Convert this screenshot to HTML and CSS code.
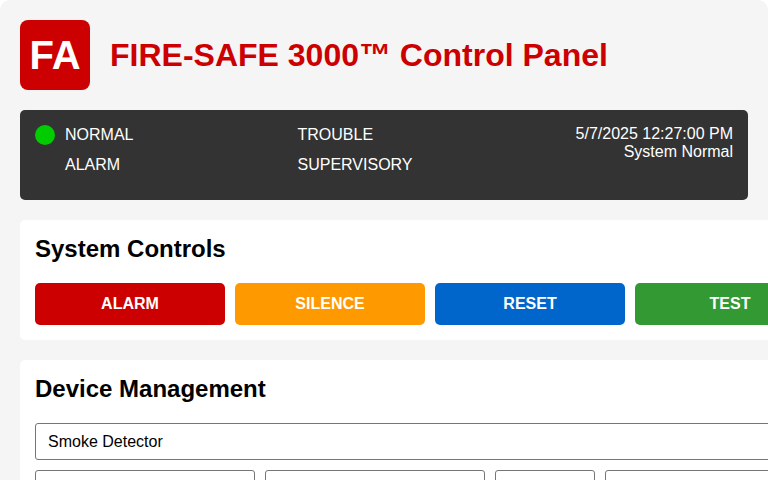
FILE: index.html
```html
<!DOCTYPE html>
<html lang="en">
<head>
    <meta charset="UTF-8">
    <title>FIRE-SAFE 3000 Control Panel</title>
    <link rel="stylesheet" href="styles.css">
</head>
<body>
    <div class="panel">
        <div class="header">
            <div class="logo">FA</div>
            <h1 class="title">FIRE-SAFE 3000™ Control Panel</h1>
        </div>
        <div class="status-bar">
            <div class="indicators">
                <div class="indicator"><span class="light light-on"></span>NORMAL</div>
                <div class="indicator"><span class="light"></span>TROUBLE</div>
                <div class="indicator"><span class="light"></span>ALARM</div>
                <div class="indicator"><span class="light"></span>SUPERVISORY</div>
            </div>
            <div class="clock">
                <div>5/7/2025 12:27:00 PM</div>
                <div>System Normal</div>
            </div>
        </div>
        <div class="card">
            <h2 class="card-title">System Controls</h2>
            <div class="controls">
                <button class="btn btn-alarm">ALARM</button>
                <button class="btn btn-silence">SILENCE</button>
                <button class="btn btn-reset">RESET</button>
                <button class="btn btn-test">TEST</button>
            </div>
        </div>
        <div class="card">
            <h2 class="card-title">Device Management</h2>
            <select class="field field-full">
                <option>Smoke Detector</option>
                <option>Heat Detector</option>
                <option>Pull Station</option>
            </select>
            <div class="field-row">
                <input class="field field-wide" type="text">
                <input class="field field-wide" type="text">
                <input class="field field-small" type="text">
                <input class="field field-wide" type="text">
            </div>
        </div>
    </div>
</body>
</html>
```

FILE: styles.css
```css
*{
    box-sizing: border-box;
    margin: 0;
    padding: 0;
}
html,body{
    height: 480px;
    overflow: hidden;
    background-color: #fff;
}
body{
    font-family: "Liberation Sans", Arial, sans-serif;
}
.panel{
    width: 768px;
    padding: 20px;
    background-color: #f5f5f5;
    border-radius: 10px;
}
.header{
    display: flex;
    align-items: center;
    margin-bottom: 20px;
}
.logo{
    width: 70px;
    height: 70px;
    margin-right: 20px;
    background-color: #c00;
    border-radius: 8px;
    color: #fff;
    font-size: 40px;
    font-weight: bold;
    line-height: 70px;
    text-align: center;
}
.title{
    color: #c00;
    font-size: 32px;
    font-weight: bold;
}
.status-bar{
    display: flex;
    justify-content: space-between;
    height: 90px;
    margin-bottom: 20px;
    padding: 15px;
    background-color: #333;
    border-radius: 5px;
    color: #fff;
    font-size: 16px;
}
.indicators{
    display: grid;
    grid-template-columns: 232.5px 1fr;
    grid-auto-rows: 20px;
    row-gap: 10px;
    width: 420px;
}
.indicator{
    display: flex;
    align-items: center;
    white-space: nowrap;
}
.light{
    width: 20px;
    height: 20px;
    margin-right: 10px;
    border-radius: 50%;
}
.light-on{
    background-color: #0c0;
}
.clock{
    text-align: right;
    line-height: 18px;
}
.card{
    width: 820px;
    margin-bottom: 20px;
    padding: 15px;
    background-color: #fff;
    border-radius: 5px;
}
.card-title{
    margin-bottom: 20px;
    color: #000;
    font-size: 24px;
    font-weight: bold;
}
.controls{
    display: flex;
    gap: 10px;
}
.btn{
    width: 190px;
    height: 42px;
    border: none;
    border-radius: 5px;
    color: #fff;
    font-family: "Liberation Sans", Arial, sans-serif;
    font-size: 16px;
    font-weight: bold;
}
.btn-alarm{
    background-color: #c00;
}
.btn-silence{
    background-color: #f90;
}
.btn-reset{
    background-color: #06c;
}
.btn-test{
    background-color: #393;
}
.field{
    height: 37px;
    padding: 8px;
    background-color: #fff;
    border: 1px solid #767676;
    border-radius: 3px;
    color: #000;
    font-family: "Liberation Sans", Arial, sans-serif;
    font-size: 16px;
}
.field-full{
    display: block;
    width: 100%;
    margin-bottom: 10px;
}
.field-row{
    display: flex;
    gap: 10px;
}
.field-wide{
    width: 220px;
}
.field-small{
    width: 100px;
}
```
